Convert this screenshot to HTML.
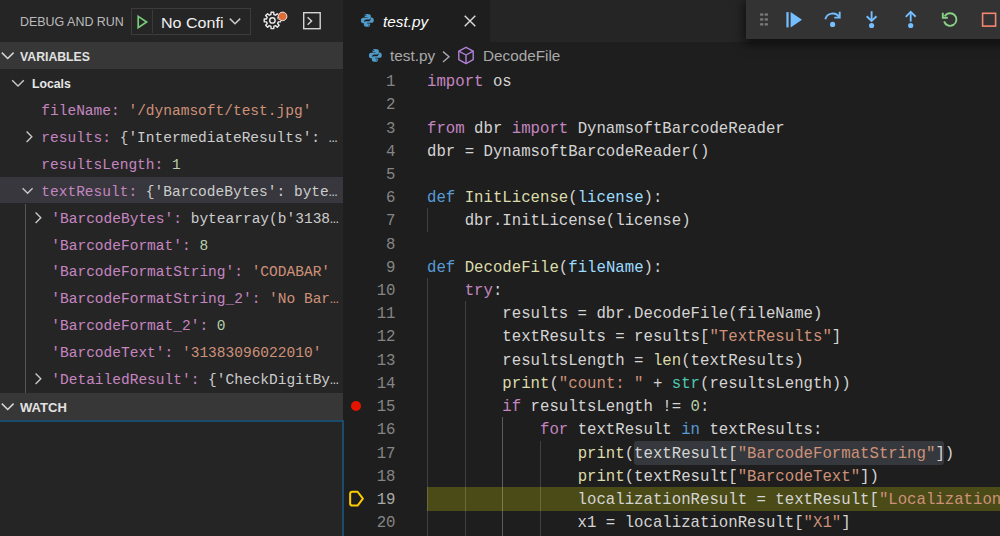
<!DOCTYPE html>
<html lang="en">
<head>
<meta charset="utf-8">
<title>test.py - Debug</title>
<style>
*{box-sizing:border-box;margin:0;padding:0}
html,body{width:1000px;height:536px;overflow:hidden;background:#1e1e1e}
body{position:relative;font-family:"Liberation Sans",sans-serif;color:#ccc}
.abs{position:absolute}
/* ---------- sidebar ---------- */
#side{left:0;top:0;width:343px;height:536px;background:#252526;overflow:hidden}
.ui{font-family:"Liberation Sans",sans-serif;white-space:pre}
#title{left:20px;top:13px;font-size:13.2px;color:#bbb;line-height:18px;transform:scaleX(.945);transform-origin:0 0}
#cfg{left:131px;top:8px;width:120px;height:27px;border:1px solid #3c3c3c;background:#252526}
#cfgsep{left:152px;top:10px;width:1px;height:23px;background:#3a3a3a}
#cfgtxt{left:160.500px;top:11.500px;font-size:14.8px;color:#f0f0f0;line-height:22px;transform:scaleX(1.085);transform-origin:0 0}
.hdr{left:0;width:343px;height:27px;background:#373737}
.hdr span{position:absolute;left:19.500px;top:6.200px;font-size:13.2px;font-weight:bold;color:#e2e2e2;line-height:18px;transform:scaleX(.93);transform-origin:0 0}
.row{left:0;width:343px;height:26.840px;overflow:hidden}
.row .t{position:absolute;top:2.300px;line-height:27px;font-family:"Liberation Mono",monospace;font-size:14.520px;white-space:pre;color:#ccc}
.n{color:#c586c0}.s{color:#ce9178}.d{color:#b5cea8}.v{color:#ccc}
#sel{background:#37373d}
/* ---------- editor ---------- */
#tabs{left:343px;top:0;width:657px;height:42px;background:#252526}
#tab{left:343px;top:0;width:146.500px;height:42px;background:#1e1e1e}
#tabtxt{left:383px;top:11px;font-size:15.3px;font-style:italic;color:#fff;line-height:22px}
#bc{left:343px;top:42px;width:657px;height:27px;background:#1e1e1e}
.bct{top:46.200px;font-size:15.3px;color:#a9a9a9;line-height:20px}
#code{left:343px;top:69.2px;width:657px;height:467px;overflow:hidden}
.ln{position:absolute;left:0;width:657px;height:23.21px}
.ln .no{position:absolute;left:0;width:52.5px;text-align:right;top:2px;line-height:23.21px;font-family:"Liberation Mono",monospace;font-size:15.7px;color:#858585}
.ln .c{position:absolute;left:84px;top:2px;line-height:23.21px;font-family:"Liberation Mono",monospace;font-size:15.7px;white-space:pre;color:#d4d4d4}
.k{color:#c586c0}.b{color:#569cd6}.f{color:#dcdcaa}.p{color:#9cdcfe}.st{color:#ce9178}.nu{color:#b5cea8}.ty{color:#4ec9b0}
.g{position:absolute;width:1px;background:#404040}
/* ---------- debug toolbar ---------- */
#tb{left:746px;top:0;width:260px;height:38.500px;background:#333333;box-shadow:0 3px 10px 2px rgba(0,0,0,.62)}
</style>
</head>
<body>

<!-- ================= SIDEBAR ================= -->
<div id="side" class="abs">
  <div id="title" class="abs ui">DEBUG AND RUN</div>
  <div id="cfg" class="abs"></div>
  <svg class="abs" style="left:135px;top:11.800px" width="16" height="20" viewBox="0 0 16 20"><path d="M3.200 4.400 L11.600 10 L3.200 15.600 Z" fill="none" stroke="#79cb7b" stroke-width="1.7" stroke-linejoin="miter"/></svg>
  <div id="cfgsep" class="abs"></div>
  <div id="cfgtxt" class="abs ui">No Confi</div>
  <svg class="abs" style="left:226.300px;top:14px" width="18" height="16" viewBox="0 0 18 16"><path d="M3.800 4.600 L9 9.800 L14.200 4.600" fill="none" stroke="#c8c8c8" stroke-width="1.5"/></svg>

  <!-- gear -->
  <svg class="abs" style="left:262px;top:9px" width="30" height="24" viewBox="0 0 30 24">
    <g fill="none" stroke="#ececec" stroke-width="1.400" stroke-linejoin="round">
      <path d="M8.93 5.48 L9.04 3.21 L11.76 3.21 L11.87 5.48 L13.55 6.17 L15.23 4.65 L17.15 6.57 L15.63 8.25 L16.32 9.93 L18.59 10.04 L18.59 12.76 L16.32 12.87 L15.63 14.55 L17.15 16.23 L15.23 18.15 L13.55 16.63 L11.87 17.32 L11.76 19.59 L9.04 19.59 L8.93 17.32 L7.25 16.63 L5.57 18.15 L3.65 16.23 L5.17 14.55 L4.48 12.87 L2.21 12.76 L2.21 10.04 L4.48 9.93 L5.17 8.25 L3.65 6.57 L5.57 4.65 L7.25 6.17 Z"/>
      <circle cx="10.400" cy="11.400" r="2.700"/>
    </g>
    <circle cx="20.600" cy="7.400" r="4.500" fill="#e8703a" stroke="#252526" stroke-width="1.200"/>
    <circle cx="20.600" cy="7.400" r="4.300" fill="#e06c35" stroke="#f0f0f0" stroke-width=".900"/>
  </svg>
  <!-- terminal -->
  <svg class="abs" style="left:301px;top:10px" width="22" height="22" viewBox="0 0 22 22">
    <rect x="2.700" y="2.700" width="16.500" height="16" fill="none" stroke="#d4d4d4" stroke-width="1.400"/>
    <path d="M6.600 7.300 L10.600 11 L6.600 14.800" fill="none" stroke="#d4d4d4" stroke-width="1.400"/>
  </svg>

  <div class="abs hdr" style="top:42px"><span class="ui">VARIABLES</span></div>
  <svg class="abs" style="left:0;top:47px" width="18" height="18" viewBox="0 0 18 18"><path d="M1.800 5.600 L7.700 11.500 L13.600 5.600" fill="none" stroke="#d8d8d8" stroke-width="1.5"/></svg>

  <!-- Locals -->
  <div class="abs row" style="top:69.30px"><span class="abs ui" style="left:32px;top:1px;line-height:27px;font-size:13.2px;font-weight:bold;color:#e7e7e7;transform:scaleX(.93);transform-origin:0 0">Locals</span></div>
  <svg class="abs" style="left:10.400px;top:74.70px" width="16" height="16" viewBox="0 0 16 16"><path d="M2.200 5.200 L8 11 L13.800 5.200" fill="none" stroke="#c8c8c8" stroke-width="1.4"/></svg>

  <div class="abs row" style="top:96.14px"><span class="t" style="left:41.300px"><span class="n">fileName:</span> <span class="s">'/dynamsoft/test.jpg'</span></span></div>
  <div class="abs row" style="top:122.98px"><span class="t" style="left:41.300px"><span class="n">results:</span> <span class="v">{'IntermediateResults': …</span></span></div>
  <svg class="abs" style="left:22px;top:129.48px" width="16" height="16" viewBox="0 0 16 16"><path d="M4.6 2.6 L9.8 7.8 L4.6 13" fill="none" stroke="#c8c8c8" stroke-width="1.4"/></svg>
  <div class="abs row" style="top:149.82px"><span class="t" style="left:41.300px"><span class="n">resultsLength:</span> <span class="d">1</span></span></div>
  <div class="abs row" id="sel" style="top:176.66px"><span class="t" style="left:41.300px"><span class="n">textResult:</span> <span class="v">{'BarcodeBytes': byte…</span></span></div>
  <svg class="abs" style="left:20px;top:183.16px" width="16" height="16" viewBox="0 0 16 16"><path d="M2.6 5.2 L7.6 10.2 L12.6 5.2" fill="none" stroke="#c8c8c8" stroke-width="1.4"/></svg>
  <div class="abs" style="left:24.700px;top:203.500px;width:1.100px;height:189.700px;background:#555"></div>

  <div class="abs row" style="top:203.50px"><span class="t" style="left:51.300px"><span class="n">'BarcodeBytes':</span> <span class="v">bytearray(b'3138…</span></span></div>
  <svg class="abs" style="left:31.300px;top:210.00px" width="16" height="16" viewBox="0 0 16 16"><path d="M4.6 2.6 L9.8 7.8 L4.6 13" fill="none" stroke="#c8c8c8" stroke-width="1.4"/></svg>
  <div class="abs row" style="top:230.34px"><span class="t" style="left:51.300px"><span class="n">'BarcodeFormat':</span> <span class="d">8</span></span></div>
  <div class="abs row" style="top:257.18px"><span class="t" style="left:51.300px"><span class="n">'BarcodeFormatString':</span> <span class="s">'CODABAR'</span></span></div>
  <div class="abs row" style="top:284.02px"><span class="t" style="left:51.300px"><span class="n">'BarcodeFormatString_2':</span> <span class="s">'No Bar…</span></span></div>
  <div class="abs row" style="top:310.86px"><span class="t" style="left:51.300px"><span class="n">'BarcodeFormat_2':</span> <span class="d">0</span></span></div>
  <div class="abs row" style="top:337.70px"><span class="t" style="left:51.300px"><span class="n">'BarcodeText':</span> <span class="s">'31383096022010'</span></span></div>
  <div class="abs row" style="top:364.54px"><span class="t" style="left:51.300px"><span class="n">'DetailedResult':</span> <span class="v">{'CheckDigitBy…</span></span></div>
  <svg class="abs" style="left:31.300px;top:371.04px" width="16" height="16" viewBox="0 0 16 16"><path d="M4.6 2.6 L9.8 7.8 L4.6 13" fill="none" stroke="#c8c8c8" stroke-width="1.4"/></svg>

  <div class="abs hdr" style="top:393.200px"><span class="ui" style="transform:scaleX(.99)">WATCH</span></div>
  <svg class="abs" style="left:0;top:398px" width="18" height="18" viewBox="0 0 18 18"><path d="M1.800 5.600 L7.700 11.500 L13.600 5.600" fill="none" stroke="#d8d8d8" stroke-width="1.5"/></svg>
</div>

<div class="abs" style="left:0;top:420px;width:344px;height:116px;border-top:2px solid #1b4c6e;border-right:2px solid #1b4c6e"></div>

<!-- ================= EDITOR ================= -->
<div id="tabs" class="abs"></div>
<div id="tab" class="abs"></div>
<div id="tabtxt" class="abs ui">test.py</div>
<div id="bc" class="abs"></div>
<div class="abs ui bct" style="left:390px">test.py</div>
<div class="abs ui bct" style="left:483px">DecodeFile</div>


<svg class="abs" style="left:360.100px;top:13.200px" width="14.700" height="14.700" viewBox="0 0 16 16"><g fill="#4f9ccb"><path d="M7.9 1C5.4 1 5 2 5 3v1.6h3.2v.7H3.4C2 5.300 1 6.300 1 8.200c0 1.900.9 2.900 2.200 2.900h1.300V9.300c0-1.300 1.100-2.300 2.400-2.300h3c1.100 0 1.900-.9 1.900-2V3c0-1.100-1-2-3.900-2zM6.300 2.100a.65.65 0 110 1.300.65.650 0 010-1.300z"/><path d="M8.100 15c2.500 0 2.900-1 2.900-2v-1.600H7.800v-.7h4.800c1.400 0 2.400-1 2.400-2.900 0-1.900-.9-2.900-2.200-2.900h-1.300v1.800c0 1.300-1.100 2.300-2.400 2.300h-3c-1.100 0-1.900.9-1.900 2V13c0 1.100 1 2 3.900 2zm1.600-1.100a.65.65 0 110-1.300.65.650 0 010 1.300z"/></g></svg>
<svg class="abs" style="left:463px;top:14px" width="14" height="14" viewBox="0 0 14 14"><path d="M1.700 1.700 L12.300 12.300 M12.300 1.700 L1.700 12.300" stroke="#dcdcdc" stroke-width="1.4" fill="none"/></svg>
<svg class="abs" style="left:367.600px;top:47.600px" width="14.700" height="14.700" viewBox="0 0 16 16"><g fill="#4f9ccb"><path d="M7.9 1C5.4 1 5 2 5 3v1.6h3.2v.7H3.4C2 5.300 1 6.300 1 8.200c0 1.900.9 2.900 2.200 2.900h1.300V9.300c0-1.300 1.100-2.300 2.400-2.300h3c1.100 0 1.900-.9 1.900-2V3c0-1.100-1-2-3.900-2zM6.300 2.100a.65.65 0 110 1.300.65.650 0 010-1.300z"/><path d="M8.100 15c2.500 0 2.900-1 2.900-2v-1.600H7.800v-.7h4.800c1.400 0 2.400-1 2.400-2.900 0-1.900-.9-2.900-2.200-2.900h-1.300v1.800c0 1.300-1.100 2.300-2.400 2.300h-3c-1.100 0-1.900.9-1.900 2V13c0 1.100 1 2 3.900 2zm1.600-1.100a.65.65 0 110-1.300.65.650 0 010 1.300z"/></g></svg>
<svg class="abs" style="left:440px;top:49px" width="14" height="16" viewBox="0 0 14 16"><path d="M3 2.600 L9 7.800 L3 13" stroke="#a8a8a8" stroke-width="1.4" fill="none"/></svg>
<svg class="abs" style="left:456px;top:45px" width="20" height="21" viewBox="0 0 20 21"><g fill="none" stroke="#b180d7" stroke-width="1.4" stroke-linejoin="round"><path d="M10 2.300 L17.200 6.100 V14.600 L10 18.600 L2.800 14.600 V6.100 Z"/><path d="M2.800 6.100 L10 10 L17.200 6.100 M10 10 V18.600"/></g></svg>

<div id="code" class="abs">
<!-- decorations (coordinates relative to #code: x-343, y-69.2) -->
  <div class="abs" style="left:84px;top:417.900px;width:573px;height:24px;background:#4b4b18"></div>
  <div class="abs" style="left:291px;top:372px;width:309.600px;height:24px;background:#35383d;border-radius:3px"></div>
  <div class="g" style="left:84px;top:139.3px;height:23.2px"></div>
  <div class="g" style="left:84px;top:208.9px;height:260px"></div>
  <div class="g" style="left:122px;top:232.1px;height:240px"></div>
  <div class="g" style="left:158.800px;top:348.200px;height:120px;background:#5c5c5c"></div>
  <div class="g" style="left:197px;top:371.4px;height:100px"></div>
  <div class="g" style="left:84px;top:417.900px;height:24px;background:#6a6a3c"></div>
  <div class="g" style="left:122px;top:417.900px;height:24px;background:#6a6a3c"></div>
  <div class="g" style="left:158.800px;top:417.900px;height:24px;background:#7c7c48"></div>
  <div class="g" style="left:197px;top:417.900px;height:24px;background:#6a6a3c"></div>
  <!-- breakpoint -->
  <div class="abs" style="left:8px;top:331.600px;width:10.400px;height:10.400px;border-radius:50%;background:#e51400"></div>
  <!-- current frame pointer -->
  <svg class="abs" style="left:4px;top:419px" width="20" height="20" viewBox="0 0 20 20"><path d="M5.300 3.750 H10.600 L15.900 10.650 L10.600 17.550 H5.300 Q3.150 17.550 3.150 15.400 V5.900 Q3.150 3.750 5.300 3.750 Z" fill="none" stroke="#ffcc00" stroke-width="2" stroke-linejoin="round"/></svg>
<!--CODE-->
  <div class="ln" style="top:0.0px"><span class="no">1</span><span class="c"><span class="k">import</span> os</span></div>
  <div class="ln" style="top:23.21px"><span class="no">2</span><span class="c"></span></div>
  <div class="ln" style="top:46.42px"><span class="no">3</span><span class="c"><span class="k">from</span> dbr <span class="k">import</span> DynamsoftBarcodeReader</span></div>
  <div class="ln" style="top:69.63px"><span class="no">4</span><span class="c">dbr = DynamsoftBarcodeReader()</span></div>
  <div class="ln" style="top:92.84px"><span class="no">5</span><span class="c"></span></div>
  <div class="ln" style="top:116.05px"><span class="no">6</span><span class="c"><span class="b">def</span> <span class="f">InitLicense</span>(<span class="p">license</span>):</span></div>
  <div class="ln" style="top:139.26px"><span class="no">7</span><span class="c">    dbr.InitLicense(license)</span></div>
  <div class="ln" style="top:162.47px"><span class="no">8</span><span class="c"></span></div>
  <div class="ln" style="top:185.68px"><span class="no">9</span><span class="c"><span class="b">def</span> <span class="f">DecodeFile</span>(<span class="p">fileName</span>):</span></div>
  <div class="ln" style="top:208.89px"><span class="no">10</span><span class="c">    <span class="k">try</span>:</span></div>
  <div class="ln" style="top:232.1px"><span class="no">11</span><span class="c">        results = dbr.DecodeFile(fileName)</span></div>
  <div class="ln" style="top:255.31px"><span class="no">12</span><span class="c">        textResults = results[<span class="st">"TextResults"</span>]</span></div>
  <div class="ln" style="top:278.52px"><span class="no">13</span><span class="c">        resultsLength = <span class="f">len</span>(textResults)</span></div>
  <div class="ln" style="top:301.73px"><span class="no">14</span><span class="c">        <span class="f">print</span>(<span class="st">"count: "</span> + <span class="ty">str</span>(resultsLength))</span></div>
  <div class="ln" style="top:324.94px"><span class="no">15</span><span class="c">        <span class="k">if</span> resultsLength != <span class="nu">0</span>:</span></div>
  <div class="ln" style="top:348.15px"><span class="no">16</span><span class="c">            <span class="k">for</span> textResult <span class="b">in</span> textResults:</span></div>
  <div class="ln" style="top:371.36px"><span class="no">17</span><span class="c">                <span class="f">print</span>(textResult[<span class="st">"BarcodeFormatString"</span>])</span></div>
  <div class="ln" style="top:394.57px"><span class="no">18</span><span class="c">                <span class="f">print</span>(textResult[<span class="st">"BarcodeText"</span>])</span></div>
  <div class="ln" style="top:417.78px"><span class="no" style="color:#a9a9a9">19</span><span class="c">                localizationResult = textResult[<span class="st">"LocalizationResult"</span>]</span></div>
  <div class="ln" style="top:440.99px"><span class="no">20</span><span class="c">                x1 = localizationResult[<span class="st">"X1"</span>]</span></div>
  <div class="ln" style="top:464.2px"><span class="no">21</span><span class="c">                y1 = localizationResult[<span class="st">"Y1"</span>]</span></div>
<!--/CODE-->
</div>

<!-- ================= DEBUG TOOLBAR ================= -->
<div id="tb" class="abs"></div>
<svg class="abs" style="left:746px;top:0" width="254" height="38" viewBox="746 0 254 38">
  <g fill="#7a7a7a">
    <rect x="760.1" y="13.400" width="3.200" height="2.300"/><rect x="764.7" y="13.400" width="3.200" height="2.300"/>
    <rect x="760.1" y="18.300" width="3.200" height="2.300"/><rect x="764.7" y="18.300" width="3.200" height="2.300"/>
    <rect x="760.1" y="23.200" width="3.200" height="2.300"/><rect x="764.7" y="23.200" width="3.200" height="2.300"/>
  </g>
  <!-- continue -->
  <rect x="786.400" y="12.100" width="2.200" height="15.300" fill="#75beff"/>
  <path d="M790.600 12.100 L802 19.700 L790.600 27.400 Z" fill="#75beff"/>
  <!-- step over -->
  <g fill="none" stroke="#75beff" stroke-width="1.900">
    <path d="M825.300 19.300 A7.600 7.600 0 0 1 839.200 17.200"/>
    <path d="M839.700 11.800 V17.600 H834.300"/>
  </g>
  <circle cx="832.600" cy="24.400" r="2.600" fill="#75beff"/>
  <!-- step into -->
  <g fill="none" stroke="#75beff" stroke-width="1.900">
    <path d="M871.600 11.200 V20.600"/>
    <path d="M866.700 16.200 L871.600 21 L876.500 16.200"/>
  </g>
  <circle cx="871.600" cy="25.500" r="2.600" fill="#75beff"/>
  <!-- step out -->
  <g fill="none" stroke="#75beff" stroke-width="1.900">
    <path d="M910.700 12.200 V21.600"/>
    <path d="M905.800 16.800 L910.700 11.900 L915.700 16.800"/>
  </g>
  <circle cx="910.700" cy="25.500" r="2.600" fill="#75beff"/>
  <!-- restart -->
  <g fill="none" stroke="#89d185" stroke-width="1.900">
    <path d="M944.700 16.300 A6.300 6.300 0 1 1 944.100 21.400"/>
    <path d="M942.800 12.800 V17.700 H947.800"/>
  </g>
  <!-- stop -->
  <rect x="982.600" y="13.300" width="13" height="12.800" fill="none" stroke="#f48771" stroke-width="1.600"/>
</svg>

</body>
</html>
